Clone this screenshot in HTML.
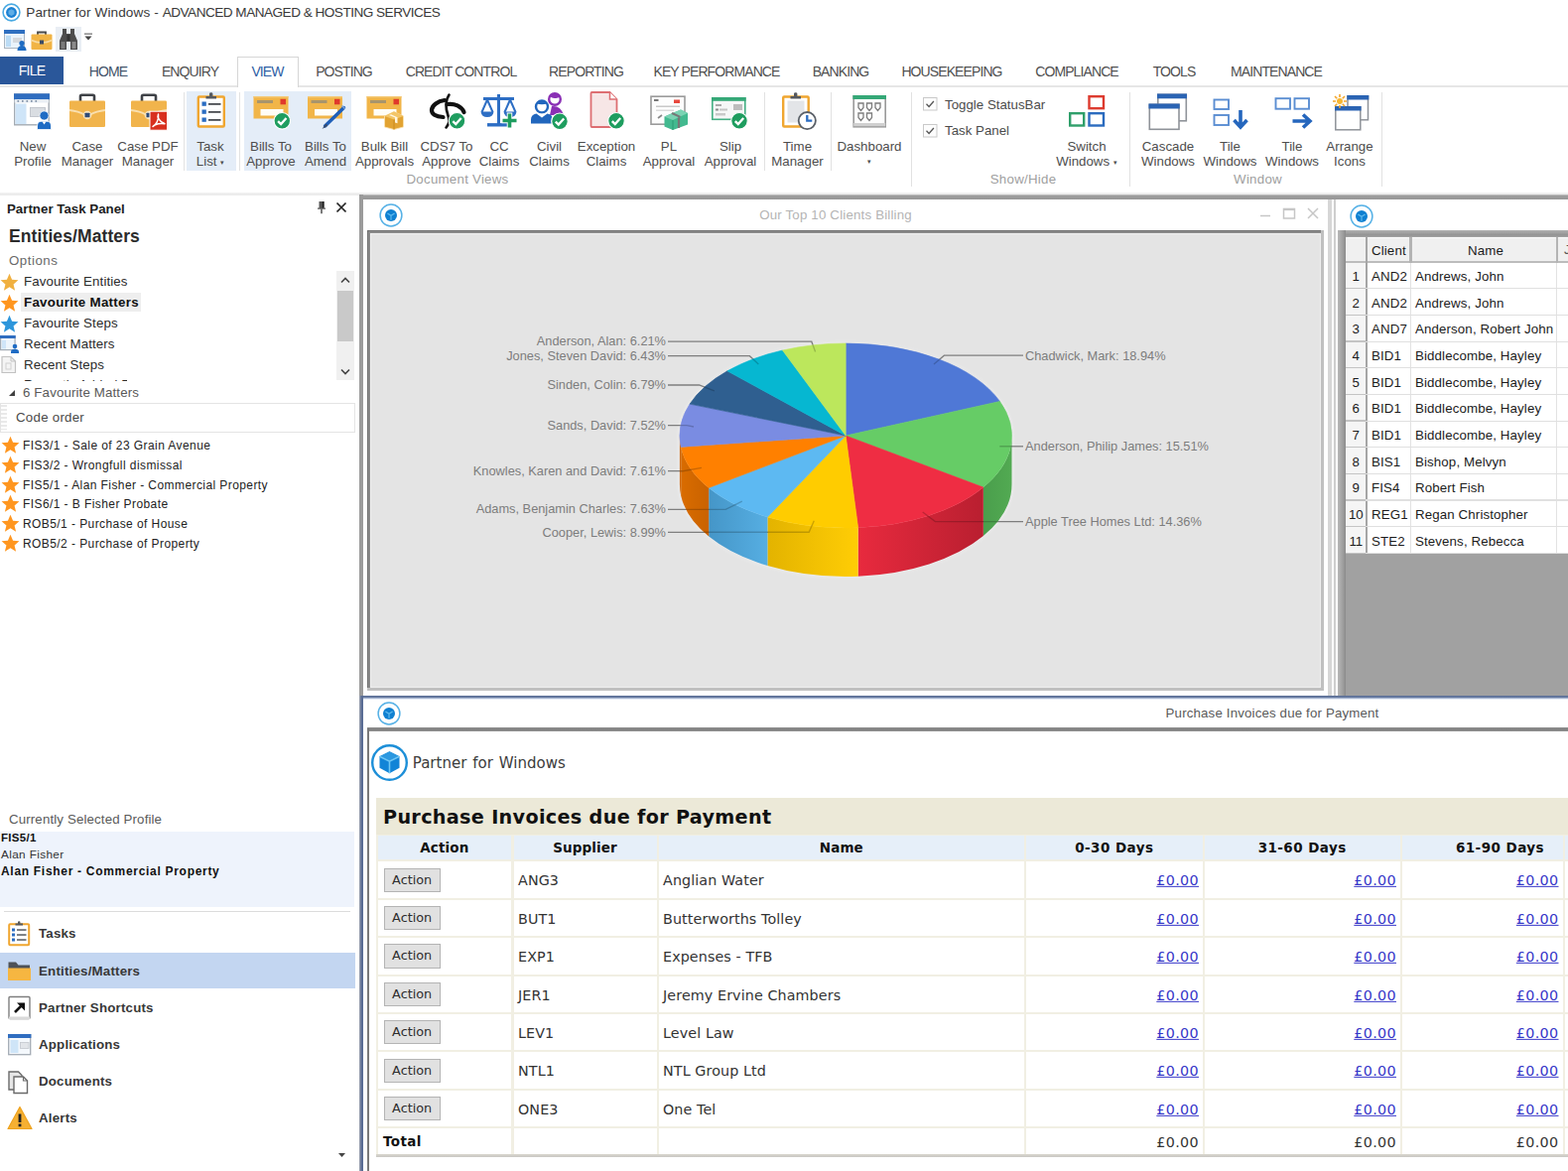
<!DOCTYPE html>
<html lang="en">
<head>
<meta charset="utf-8">
<title>Partner for Windows - ADVANCED MANAGED &amp; HOSTING SERVICES</title>
<style>
*{box-sizing:border-box;margin:0;padding:0}
html,body{width:1580px;height:1180px;overflow:hidden;background:#fff}
body{font-family:"Liberation Sans",sans-serif;font-size:12px;color:#444;position:relative}
.abs{position:absolute}
.t{position:absolute;white-space:nowrap;line-height:1}
svg{position:absolute;overflow:visible}
/* title */
#title{left:26.3px;top:6.3px;font-size:13.6px;color:#3a3a3a}
/* tabs */
.tab{position:absolute;top:65.2px;font-size:14px;letter-spacing:-.9px;color:#505050;white-space:nowrap;line-height:1;transform:translateX(-50%)}
#filetab{position:absolute;left:0;top:57px;width:64px;height:28px;background:#2a579a;color:#fff;font-size:14px;letter-spacing:-.8px;text-align:center;line-height:29px}
#viewtab{position:absolute;left:239px;top:57px;width:62px;height:31px;border:1px solid #d6d6d6;border-bottom:none;background:#fff}
#tabline{position:absolute;left:0;top:86px;width:1580px;height:2px;background:#e6e6e6}
/* ribbon */
.rb{position:absolute;top:139.5px;width:90px;margin-left:-45px;text-align:center;font-size:13.3px;line-height:15.3px;color:#4e4e4e;white-space:nowrap;letter-spacing:0}
.hl{position:absolute;background:#e4edf8}
.sep{position:absolute;width:1px;background:#e2e2e2}
.grp{position:absolute;top:174px;font-size:13.3px;letter-spacing:.25px;color:#a0a0a0;white-space:nowrap;line-height:1;transform:translateX(-50%)}
.ico{position:absolute;top:93px;width:40px;height:40px;margin-left:-20px}
</style>
</head>
<body>
<!-- ===== title bar ===== -->
<svg style="left:1px;top:2px" width="22" height="22" viewBox="0 0 22 22"><circle cx="10.5" cy="10.5" r="8.4" fill="#fff" stroke="#4aaae2" stroke-width="1.6"/><circle cx="10.5" cy="10.5" r="5.4" fill="#1b81d3"/><path d="M10.5 7.2l3 1.6v3.4l-3 1.7-3-1.7V8.800z" fill="#7cc0ee" opacity=".7"/></svg>
<div class="t" id="title"><span style="letter-spacing:.1px">Partner for Windows - </span><span style="letter-spacing:-.52px">ADVANCED MANAGED &amp; HOSTING SERVICES</span></div>
<!-- quick access -->
<div class="abs" style="left:56px;top:27px;width:26px;height:25px;background:#e9eef4"></div>
<svg style="left:4px;top:30px" width="22" height="22" viewBox="0 0 22 22"><rect x="0.5" y="0.500" width="20" height="18" fill="#eaf3fb" stroke="#a9b4c0"/><rect x="0" y="0" width="21" height="4" fill="#2f6fc0"/><rect x="2" y="6" width="5" height="11" fill="#bcdcf5"/><rect x="9" y="8" width="9" height="5" fill="#d5d9de"/><circle cx="18" cy="13.5" r="2.6" fill="#1e6cc3"/><path d="M13.500 21c0-3.500 2-5 4.500-5s4.500 1.500 4.500 5z" fill="#1e6cc3"/></svg>
<svg style="left:31px;top:30px" width="22" height="22" viewBox="0 0 22 22"><path d="M7 5V2.500h8V5" fill="none" stroke="#4a4a4a" stroke-width="1.800"/><rect x="0.500" y="4.500" width="21" height="15.500" rx="1" fill="#f1b445"/><path d="M0.500 10.500q10.500 5 21 0" fill="none" stroke="#f8dca3" stroke-width="1.500"/><rect x="9" y="10.500" width="4" height="4" fill="#3b4c66"/></svg>
<svg style="left:58px;top:28px" width="22" height="23" viewBox="0 0 22 23"><path d="M5 1h4v5h4V1h4v5l3 7v9h-7v-8h-4v8H2v-9l3-7z" fill="#4d4d4d"/><rect x="3.500" y="14" width="4" height="7" fill="#7a7a7a"/><rect x="14.500" y="14" width="4" height="7" fill="#8a8a8a"/><rect x="9.500" y="7" width="3" height="6" fill="#333"/></svg>
<svg style="left:84px;top:33px" width="10" height="8" viewBox="0 0 10 8"><rect x="1" y="0.500" width="8" height="1.300" fill="#777"/><path d="M1.500 3.500h7L5 7.500z" fill="#444"/></svg>

<!-- ===== tabs ===== -->
<div id="tabline"></div>
<div id="filetab">FILE</div>
<div id="viewtab"></div>
<div class="tab" style="left:109px;color:#44546a">HOME</div>
<div class="tab" style="left:191.500px">ENQUIRY</div>
<div class="tab" style="left:269.500px;color:#2f5fa5">VIEW</div>
<div class="tab" style="left:346.500px">POSTING</div>
<div class="tab" style="left:464.500px">CREDIT CONTROL</div>
<div class="tab" style="left:590.500px">REPORTING</div>
<div class="tab" style="left:722px">KEY PERFORMANCE</div>
<div class="tab" style="left:847px">BANKING</div>
<div class="tab" style="left:959px">HOUSEKEEPING</div>
<div class="tab" style="left:1085px">COMPLIANCE</div>
<div class="tab" style="left:1183px">TOOLS</div>
<div class="tab" style="left:1286px">MAINTENANCE</div>

<!-- ===== ribbon body ===== -->
<div class="hl" style="left:188px;top:92px;width:50px;height:80px"></div>
<div class="hl" style="left:246px;top:92px;width:108px;height:80px"></div>
<div class="sep" style="left:185px;top:93px;height:79px"></div>
<div class="sep" style="left:241px;top:93px;height:79px"></div>
<div class="sep" style="left:770px;top:93px;height:79px"></div>
<div class="sep" style="left:837px;top:93px;height:79px"></div>
<div class="sep" style="left:918px;top:93px;height:95px"></div>
<div class="sep" style="left:1138px;top:93px;height:95px"></div>
<div class="sep" style="left:1392px;top:93px;height:95px"></div>
<div class="abs" style="left:0;top:193.500px;width:1580px;height:3.800px;background:linear-gradient(#f6f6f6,#ececec 40%,#ededed)"></div>

<div class="rb" style="left:33px">New<br>Profile</div>
<div class="rb" style="left:88px">Case<br>Manager</div>
<div class="rb" style="left:149px">Case PDF<br>Manager</div>
<div class="rb" style="left:212px">Task<br>List <span style="font-size:7px;position:relative;top:-1px">▾</span></div>
<div class="rb" style="left:273px">Bills To<br>Approve</div>
<div class="rb" style="left:328px">Bills To<br>Amend</div>
<div class="rb" style="left:387.500px">Bulk Bill<br>Approvals</div>
<div class="rb" style="left:450px">CDS7 To<br>Approve</div>
<div class="rb" style="left:503px">CC<br>Claims</div>
<div class="rb" style="left:553.500px">Civil<br>Claims</div>
<div class="rb" style="left:611px">Exception<br>Claims</div>
<div class="rb" style="left:674px">PL<br>Approval</div>
<div class="rb" style="left:736px">Slip<br>Approval</div>
<div class="rb" style="left:803.500px">Time<br>Manager</div>
<div class="rb" style="left:876px">Dashboard<br><span style="font-size:7px;position:relative;top:-2px">▾</span></div>
<div class="rb" style="left:1095px">Switch<br>Windows <span style="font-size:7px;position:relative;top:-1px">▾</span></div>
<div class="rb" style="left:1177px">Cascade<br>Windows</div>
<div class="rb" style="left:1239.500px">Tile<br>Windows</div>
<div class="rb" style="left:1302px">Tile<br>Windows</div>
<div class="rb" style="left:1360px">Arrange<br>Icons</div>
<div class="grp" style="left:461px">Document Views</div>
<div class="grp" style="left:1031px">Show/Hide</div>
<div class="grp" style="left:1267.500px">Window</div>

<!-- checkboxes -->
<svg style="left:930px;top:98px" width="15" height="14" viewBox="0 0 15 14"><rect x="0.500" y="0.500" width="13.500" height="12.500" fill="#fdfdfd" stroke="#c9c9c9"/><path d="M3.500 6.800l2.600 2.700 4.800-5.500" fill="none" stroke="#555" stroke-width="1.300"/></svg>
<svg style="left:930px;top:125px" width="15" height="14" viewBox="0 0 15 14"><rect x="0.500" y="0.500" width="13.500" height="12.500" fill="#fdfdfd" stroke="#c9c9c9"/><path d="M3.500 6.800l2.600 2.700 4.800-5.500" fill="none" stroke="#555" stroke-width="1.300"/></svg>
<div class="t" style="left:952px;top:98.500px;font-size:13.300px;color:#4c4c4c">Toggle StatusBar</div>
<div class="t" style="left:952px;top:124.500px;font-size:13.300px;color:#4c4c4c">Task Panel</div>
<!-- ===== ribbon icons ===== -->
<svg width="0" height="0" style="left:0;top:0"><defs>
<symbol id="chk" viewBox="0 0 18 18" overflow="visible"><circle cx="9" cy="9" r="8.300" fill="#1e9d5f" stroke="#fff" stroke-width="1.200"/><path d="M4.800 9.300l3 3 5.400-6" fill="none" stroke="#fff" stroke-width="2.300"/></symbol>
<symbol id="bill" viewBox="0 0 35 23" overflow="visible"><rect x="0" y="0" width="35" height="22.500" fill="#f1b548"/><rect x="0" y="0" width="35" height="1.500" fill="#f5c873"/><rect x="3.500" y="4" width="16" height="3" fill="#a8956c"/><rect x="27" y="2.800" width="5.500" height="5.500" fill="#e0392b"/><rect x="7" y="13" width="23" height="6.500" fill="#fffdf6"/></symbol>
<symbol id="case" viewBox="0 0 36 34" overflow="visible"><path d="M11 8V3.200q0-1.500 1.500-1.500h11q1.500 0 1.500 1.500V8" fill="none" stroke="#3f4247" stroke-width="2.600"/><rect x="0" y="7.500" width="36" height="26.500" rx="1.200" fill="#f1b44c"/><path d="M0 17q9 1 15 4.500h6q6-3.500 15-4.500" fill="none" stroke="#f9dfae" stroke-width="1.800"/><circle cx="18" cy="22" r="4.300" fill="#fbe6bd"/><rect x="15.500" y="19.700" width="5" height="4.600" rx=".6" fill="#2d4a78"/></symbol>
</defs></svg>

<!-- New Profile -->
<svg class="ico" style="left:33px" viewBox="0 0 40 40"><rect x="1.700" y="2" width="34.500" height="30.800" fill="#fff" stroke="#a4abb3" stroke-width="1.400"/><rect x="1" y="1.300" width="36" height="6" fill="#2f6dc0"/><rect x="1.700" y="7.300" width="34.500" height="3.200" fill="#e9eef4"/><g fill="#6b7f99"><rect x="4.500" y="8.200" width="1.600" height="1.500"/><rect x="9" y="8.200" width="1.600" height="1.500"/><rect x="13.500" y="8.200" width="1.600" height="1.500"/><rect x="18" y="8.200" width="1.600" height="1.500"/><rect x="22.500" y="8.200" width="1.600" height="1.500"/></g><rect x="2.500" y="11.500" width="11" height="20.500" fill="#cfe5f8"/><rect x="17.500" y="15.500" width="15" height="9" fill="#d9dde2" stroke="#b9bec6" stroke-width=".8"/><circle cx="31.500" cy="23.500" r="4.600" fill="#1f6cc4" stroke="#fff" stroke-width=".8"/><path d="M24.500 37.500v-3.500q0-4.800 4.500-4.800h5q4.500 0 4.500 4.800v3.500z" fill="#1f6cc4" stroke="#fff" stroke-width=".8"/><path d="M29.500 29.500l2 3 2-3z" fill="#fff"/></svg>
<!-- Case Manager -->
<svg class="ico" style="left:88px" viewBox="0 0 40 40"><use href="#case" x="2" y="1" width="36" height="34"/></svg>
<!-- Case PDF Manager -->
<svg class="ico" style="left:149px" viewBox="0 0 40 40"><use href="#case" x="3" y="1" width="36" height="34"/><rect x="22" y="19.200" width="17.500" height="19" fill="#d8301e" stroke="#fff" stroke-width="1"/><path d="M30.500 22c-1.500 3 1 7.500 6.500 9.800c-4-1-9.500 0-12 2.700c3-1.500 6.500-6.500 5.500-12.500z" fill="none" stroke="#fff" stroke-width="1.500" stroke-linejoin="round"/></svg>
<!-- Task List -->
<svg class="ico" style="left:212px" viewBox="0 0 40 40"><rect x="7.800" y="4.500" width="26" height="30" rx="1" fill="#fff" stroke="#f0a630" stroke-width="2.400"/><path d="M15.500 6.500v-2.500h3.500v-2.500q0-1.300 1.700-1.300t1.700 1.300v2.500h3.600v2.500z" fill="#56595e"/><g fill="#2a6cc2"><rect x="11.500" y="9.500" width="4.300" height="4.300"/><rect x="11.500" y="17.500" width="4.300" height="4.300"/><rect x="11.500" y="25.500" width="4.300" height="4.300"/></g><g fill="#4a4d52"><rect x="18" y="11" width="12.500" height="1.800"/><rect x="18" y="19" width="12.500" height="1.800"/><rect x="18" y="27" width="12.500" height="1.800"/></g></svg>
<!-- Bills To Approve -->
<svg class="ico" style="left:273px" viewBox="0 0 40 40"><use href="#bill" x="2.500" y="4" width="35" height="23"/><use href="#chk" x="22.300" y="19.800" width="18" height="18"/></svg>
<!-- Bills To Amend -->
<svg class="ico" style="left:328px" viewBox="0 0 40 40"><use href="#bill" x="2" y="4" width="35" height="23"/><path d="M38.500 15.500L19.500 34" stroke="#1f5fb8" stroke-width="3.400" stroke-linecap="round"/><path d="M20.500 31.500l-4 5.500 5.800-3.300z" fill="#3a4a68"/><path d="M36.500 13.500l3.200 3.200" stroke="#7aa4dc" stroke-width="1.500"/></svg>
<!-- Bulk Bill Approvals -->
<svg class="ico" style="left:387.500px" viewBox="0 0 40 40"><use href="#bill" x="1.500" y="4" width="35" height="23"/><path d="M19.500 24l9.500-4.500 9.500 4.500v11l-9.500 2.500-9.500-2.500z" fill="#e2a332" stroke="#fbe3b3" stroke-width=".8"/><path d="M19.500 24l9.500 3.500 9.500-3.500-9.500-4.500z" fill="#f3c567"/><path d="M29 27.500v10" stroke="#c98a1f" stroke-width="1"/><path d="M26 22.300l6.500 3v6l-2.500-.8v-5l-6-2.500z" fill="#fff6e0"/></svg>
<!-- CDS7 To Approve -->
<svg class="ico" style="left:450px" viewBox="0 0 40 40"><path d="M18 8c-7 1-12.500 5-13 9.500s4 7 11.500 7.500" fill="none" stroke="#111" stroke-width="4.200" stroke-linecap="round"/><path d="M22.500 2.500c-4 6-3.500 14-1 21s0 9-2 12" fill="none" stroke="#111" stroke-width="2.600" stroke-linecap="round"/><path d="M21 12c7-1 14 2 16.500 8" fill="none" stroke="#111" stroke-width="4.200" stroke-linecap="round"/><use href="#chk" x="21.500" y="19.800" width="18" height="18"/></svg>
<!-- CC Claims -->
<svg class="ico" style="left:503px" viewBox="0 0 40 40"><g fill="none" stroke="#2d6ec4" stroke-width="3"><path d="M19.500 2v30"/><path d="M4 6.500h31"/><path d="M8 7.500l-5.500 12.500M8 7.500l5.500 12.500M31 7.500l-5.500 12.500M31 7.500l5.500 12.500" stroke-width="2"/><path d="M8 32.800h23" stroke-width="3.400"/></g><path d="M1.500 19.500h13q-.8 5.500-6.500 5.500t-6.500-5.500zM24.500 19.500h13q-.8 5.500-6.500 5.500t-6.500-5.500z" fill="#2d6ec4"/><path d="M30.500 20.500v16M22.500 28.500h16" stroke="#fff" stroke-width="5.500"/><path d="M30.500 21.500v14M23.500 28.500h14" stroke="#1e9d5f" stroke-width="3.600"/></svg>
<!-- Civil Claims -->
<svg class="ico" style="left:553.500px" viewBox="0 0 40 40"><circle cx="25" cy="7" r="5.800" fill="#fff" stroke="#8a2fb5" stroke-width="2.400"/><path d="M20 3.500q5-4.500 10 0q-1 3-5 2.500t-5-2.500z" fill="#8a2fb5"/><path d="M22 14q9-1 12 9h-14z" fill="#8a2fb5"/><circle cx="12" cy="14.500" r="6" fill="#fff" stroke="#2166bd" stroke-width="2.400"/><path d="M6.500 11.500q5.500-5 11 0q-5.500 1.500-11 0z" fill="#2166bd"/><path d="M1 31.500v-4q0-5 5.500-6l5.500 4 5.500-4q5.500 1 5.500 6v4z" fill="#2166bd"/><path d="M9.500 21.500l2.500 4 2.500-4z" fill="#fff"/><use href="#chk" x="21" y="20.300" width="18" height="18"/></svg>
<!-- Exception Claims -->
<svg class="ico" style="left:611px" viewBox="0 0 40 40"><path d="M5.500 0h18l7 7v28h-25q-1 0-1-1v-33q0-1 1-1z" fill="#f7e6e6" stroke="#dd6e72" stroke-width="1.800"/><path d="M23.500 0v7h7" fill="#fff" stroke="#dd6e72" stroke-width="1.500"/><use href="#chk" x="21" y="19.800" width="18" height="18"/></svg>
<!-- PL Approval -->
<svg class="ico" style="left:674px" viewBox="0 0 40 40"><rect x="2" y="4.200" width="34" height="28" fill="#fdfdfd" stroke="#9b9b9b" stroke-width="1.600"/><rect x="5" y="7" width="4.500" height="2" fill="#777"/><rect x="25" y="7.500" width="6" height="3.500" fill="#e8473d"/><rect x="7" y="13.500" width="24" height="1.500" fill="#c9c9c9"/><rect x="7" y="17.500" width="18" height="1.500" fill="#dcdcdc"/><path d="M9 26l4-3" stroke="#888" stroke-width="1.600"/><path d="M15.500 24.500l8-3.500 8.500-3.500 7 3.500v11.500l-15 5.500-8.500-3.500z" fill="#42b98f"/><path d="M15.500 24.500l8.500 3.500 15-7-7-3.500z" fill="#7ad3b3"/><path d="M24 28v10" stroke="#2a9a72" stroke-width="1"/><path d="M30 25.500v10.500" stroke="#777" stroke-width="2.200"/><path d="M23 21l8.500 3.800" stroke="#777" stroke-width="2"/></svg>
<!-- Slip Approval -->
<svg class="ico" style="left:736px" viewBox="0 0 40 40"><rect x="1.800" y="5.800" width="33" height="21.500" fill="#f6f7f7" stroke="#45b084" stroke-width="1.600"/><rect x="1" y="5" width="34.600" height="3.800" fill="#35a877"/><rect x="5" y="12" width="6" height="2" fill="#a9a9a9"/><rect x="5" y="16.500" width="3" height="2" fill="#8c8c8c"/><rect x="9" y="16.500" width="8" height="2" fill="#c5c5c5"/><rect x="5" y="21" width="10" height="2.500" fill="#c9c9c9"/><rect x="23" y="12" width="9" height="6" fill="#bdbdbd"/><use href="#chk" x="20" y="19.800" width="18" height="18"/></svg>
<!-- Time Manager -->
<svg class="ico" style="left:803.500px" viewBox="0 0 40 40"><rect x="5.200" y="4.500" width="25.500" height="30" rx="1" fill="#fff" stroke="#f0a630" stroke-width="2.400"/><rect x="9.500" y="8.500" width="17" height="22" fill="#e3e5e8"/><path d="M12.500 6.500v-2.500h3.500v-2.500q0-1.300 1.700-1.300t1.700 1.300v2.500h3.600v2.500z" fill="#56595e"/><circle cx="29.300" cy="28.600" r="8.600" fill="#fff" stroke="#5a6068" stroke-width="1.800"/><path d="M29.300 23v5.600h5" fill="none" stroke="#2a6cc2" stroke-width="2.300"/></svg>
<!-- Dashboard -->
<svg class="ico" style="left:876px" viewBox="0 0 40 40"><rect x="4.200" y="3.800" width="32" height="31" fill="#fdfdfd" stroke="#9a9a9a" stroke-width="1.600"/><rect x="3.400" y="3" width="33.600" height="4" fill="#35a877"/><rect x="4.200" y="31" width="32" height="3.200" fill="#d0d0d0"/><g fill="#fff" stroke="#7d7d7d" stroke-width="1.300"><path d="M9 11h5v4.500l-2.500 3-2.500-3z"/><path d="M17.500 11h5v4.500l-2.500 3-2.500-3z"/><path d="M26 11h5v4.500l-2.500 3-2.500-3z"/><path d="M9 21h5v4.500l-2.500 3-2.500-3z"/><path d="M17.500 21h5v4.500l-2.500 3-2.500-3z"/></g></svg>
<!-- Switch Windows -->
<svg class="ico" style="left:1095px" viewBox="0 0 40 40"><rect x="22.500" y="4.200" width="14.500" height="12" fill="#fff" stroke="#dd3b2f" stroke-width="2.400"/><rect x="3.200" y="21.200" width="14" height="12.300" fill="#fff" stroke="#2f9f6a" stroke-width="2.400"/><rect x="22.500" y="21.200" width="14.500" height="12.300" fill="#fff" stroke="#2b6bbf" stroke-width="2.400"/></svg>
<!-- Cascade Windows -->
<svg class="ico" style="left:1177px" viewBox="0 0 40 40"><rect x="9.800" y="2.300" width="28.500" height="26.500" fill="#fff" stroke="#8f9399" stroke-width="1.600"/><rect x="9" y="1.500" width="30" height="4.800" fill="#2a63b3"/><rect x="1.300" y="12.300" width="29.700" height="25" fill="#fff" stroke="#8f9399" stroke-width="1.600"/><rect x="0.500" y="11.500" width="31.200" height="5" fill="#2a63b3"/></svg>
<!-- Tile Windows (vertical) -->
<svg class="ico" style="left:1239.500px" viewBox="0 0 40 40"><rect x="3.500" y="7.500" width="14.500" height="9.500" fill="#fff" stroke="#5b8ed2" stroke-width="1.900"/><rect x="3.500" y="23" width="14.500" height="10" fill="#fff" stroke="#5b8ed2" stroke-width="1.900"/><path d="M30 18v16M23.500 28l6.500 7 6.500-7" fill="none" stroke="#2566bd" stroke-width="3.600"/></svg>
<!-- Tile Windows (horizontal) -->
<svg class="ico" style="left:1302px" viewBox="0 0 40 40"><rect x="3.500" y="6.200" width="14.500" height="10.500" fill="#fff" stroke="#5b8ed2" stroke-width="1.900"/><rect x="22.500" y="6.200" width="14.500" height="10.500" fill="#fff" stroke="#5b8ed2" stroke-width="1.900"/><path d="M20.500 29h17M31 22.500l7 6.500-7 6.500" fill="none" stroke="#2566bd" stroke-width="3.600"/></svg>
<!-- Arrange Icons -->
<svg class="ico" style="left:1360px" viewBox="0 0 40 40"><rect x="18" y="3.800" width="20.500" height="24" fill="#fff" stroke="#8f9399" stroke-width="1.500"/><rect x="17.300" y="3" width="22" height="4.500" fill="#2a63b3"/><rect x="5.800" y="14.800" width="25" height="23" fill="#fff" stroke="#8f9399" stroke-width="1.500"/><rect x="5" y="14" width="26.600" height="4.500" fill="#2a63b3"/><g stroke="#f4a62a" stroke-width="1.600"><path d="M10 2v14M3 9h14M5 4l10 10M15 4L5 14"/></g><circle cx="10" cy="9" r="3.600" fill="#f7b733" stroke="#fff" stroke-width="1"/></svg>
<!-- ===== left task panel ===== -->
<style>
.lp{position:absolute;white-space:nowrap;line-height:1;color:#2b2b2b;font-size:13.300px;letter-spacing:.1px;transform:translateY(-50%)}
.tr{position:absolute;left:23px;white-space:nowrap;line-height:1;color:#222;font-size:12px;letter-spacing:.42px;transform:translateY(-50%)}
.nav{position:absolute;left:39px;white-space:nowrap;line-height:1;color:#383838;font-size:13.300px;font-weight:bold;letter-spacing:.2px;transform:translateY(-50%)}
</style>
<svg width="0" height="0" style="left:0;top:0"><defs>
<symbol id="star" viewBox="0 0 20 20"><path d="M10 0.800l2.700 6.200 6.700.6-5.100 4.400 1.600 6.600-5.900-3.600-5.900 3.600 1.600-6.600L0.600 7.600l6.700-.6z"/></symbol>
</defs></svg>
<div class="lp" style="left:7px;top:211px;font-weight:bold;font-size:13.300px;letter-spacing:0;color:#1e1e1e">Partner Task Panel</div>
<svg style="left:318px;top:202px" width="12" height="14" viewBox="0 0 12 14"><path d="M3.500 1h5v6.500h1.500v1.300h-8V7.500h1.500z" fill="#555"/><rect x="6.800" y="1" width="1.700" height="6.500" fill="#222"/><path d="M6 8.800v4.500" stroke="#333" stroke-width="1.300"/></svg>
<svg style="left:338px;top:203.300px" width="12" height="12" viewBox="0 0 12 12"><path d="M1.500 1.500l9 9M10.500 1.500l-9 9" stroke="#222" stroke-width="1.700"/></svg>
<div class="lp" style="left:9px;top:238.500px;font-weight:bold;font-size:17.500px;letter-spacing:.1px;color:#2b2b2b">Entities/Matters</div>
<div class="lp" style="left:9px;top:263px;color:#6a6a6a;letter-spacing:.5px">Options</div>

<svg style="left:0;top:275px" width="19" height="19" viewBox="0 0 20 20"><use href="#star" fill="#f0b040"/></svg>
<svg style="left:0;top:296px" width="19" height="19" viewBox="0 0 20 20"><use href="#star" fill="#ff961f"/></svg>
<svg style="left:0;top:316.500px" width="19" height="19" viewBox="0 0 20 20"><use href="#star" fill="#2e96db"/></svg>
<svg style="left:0;top:337px" width="19" height="19" viewBox="0 0 19 19"><rect x="0.600" y="1.600" width="14.500" height="14" fill="#eef5fb" stroke="#a4acb5" stroke-width="1.200"/><rect x="0" y="1" width="15.700" height="3" fill="#2f6dc0"/><rect x="2" y="6" width="4" height="8.500" fill="#cfe5f8"/><circle cx="15" cy="12" r="2.300" fill="#1f6cc4"/><path d="M11 19v-1.500q0-2.700 4-2.700t4 2.700v1.500z" fill="#1f6cc4"/></svg>
<svg style="left:0;top:358px" width="19" height="19" viewBox="0 0 19 19"><path d="M2 1.500h9l4.500 4.500v11.500h-13.500z" fill="#f4f4f4" stroke="#c2c2c2" stroke-width="1.200"/><path d="M11 1.500v4.500h4.500" fill="none" stroke="#c2c2c2"/><rect x="6" y="8" width="5" height="6" fill="none" stroke="#d0d0d0"/></svg>
<div class="abs" style="left:21px;top:294.500px;width:121px;height:19px;background:#eeeeee"></div>
<div class="lp" style="left:24px;top:284px">Favourite Entities</div>
<div class="lp" style="left:24px;top:305px;font-weight:bold;letter-spacing:.3px;color:#111">Favourite Matters</div>
<div class="lp" style="left:24px;top:326px">Favourite Steps</div>
<div class="lp" style="left:24px;top:347px">Recent Matters</div>
<div class="lp" style="left:24px;top:367.500px">Recent Steps</div>
<div class="abs" style="left:24px;top:381px;width:104px;height:3px;overflow:hidden"><div class="t" style="left:0;top:0;font-size:13.300px;letter-spacing:.1px;color:#2b2b2b">Recently Added Entities</div></div>
<!-- scrollbar -->
<div class="abs" style="left:339px;top:273px;width:18px;height:110px;background:#f0f0f0"></div>
<div class="abs" style="left:340px;top:293px;width:16px;height:51px;background:#c9c9c9"></div>
<svg style="left:343px;top:279px" width="10" height="7" viewBox="0 0 10 7"><path d="M1 5.500l4-4 4 4" fill="none" stroke="#444" stroke-width="1.600"/></svg>
<svg style="left:343px;top:371px" width="10" height="7" viewBox="0 0 10 7"><path d="M1 1.500l4 4 4-4" fill="none" stroke="#444" stroke-width="1.600"/></svg>

<svg style="left:8px;top:392px" width="8" height="8" viewBox="0 0 8 8"><path d="M7 1v6H1z" fill="#404040"/></svg>
<div class="lp" style="left:23px;top:395.500px;color:#5a5a5a;letter-spacing:.13px">6 Favourite Matters</div>
<div class="abs" style="left:0;top:405.500px;width:358px;height:30px;border:1px solid #e4e4e4;background:#fff"></div>
<div class="abs" style="left:1px;top:408px;width:6px;height:25px;background:repeating-linear-gradient(#e9e9e9 0 2px,#fff 2px 4px)"></div>
<div class="lp" style="left:16px;top:421px;color:#4a4a4a;letter-spacing:.25px">Code order</div>

<svg style="left:1px;top:439px" width="19" height="19" viewBox="0 0 20 20"><use href="#star" fill="#ff961f"/></svg>
<svg style="left:1px;top:459px" width="19" height="19" viewBox="0 0 20 20"><use href="#star" fill="#ff961f"/></svg>
<svg style="left:1px;top:478.500px" width="19" height="19" viewBox="0 0 20 20"><use href="#star" fill="#ff961f"/></svg>
<svg style="left:1px;top:498px" width="19" height="19" viewBox="0 0 20 20"><use href="#star" fill="#ff961f"/></svg>
<svg style="left:1px;top:518px" width="19" height="19" viewBox="0 0 20 20"><use href="#star" fill="#ff961f"/></svg>
<svg style="left:1px;top:537.500px" width="19" height="19" viewBox="0 0 20 20"><use href="#star" fill="#ff961f"/></svg>
<div class="tr" style="top:449px">FIS3/1 - Sale of 23 Grain Avenue</div>
<div class="tr" style="top:469px">FIS3/2 - Wrongfull dismissal</div>
<div class="tr" style="top:488.500px">FIS5/1 - Alan Fisher - Commercial Property</div>
<div class="tr" style="top:508px">FIS6/1 - B Fisher Probate</div>
<div class="tr" style="top:528px">ROB5/1 - Purchase of House</div>
<div class="tr" style="top:547.500px">ROB5/2 - Purchase of Property</div>

<div class="lp" style="left:9px;top:826px;color:#5a5a5a;letter-spacing:.13px">Currently Selected Profile</div>
<div class="abs" style="left:0;top:837.500px;width:357px;height:76.500px;background:#eef3fc"></div>
<div class="tr" style="left:1px;top:845px;font-weight:bold;font-size:11.500px;letter-spacing:.3px;color:#111">FIS5/1</div>
<div class="tr" style="left:1px;top:861.500px;font-size:11.800px;letter-spacing:.35px;color:#333">Alan Fisher</div>
<div class="tr" style="left:1px;top:878px;font-weight:bold;font-size:12px;letter-spacing:.7px;color:#111">Alan Fisher - Commercial Property</div>
<div class="abs" style="left:4px;top:918px;width:349px;height:1px;background:#dcdcdc"></div>

<div class="abs" style="left:0;top:960px;width:358px;height:36.300px;background:#c3d6f1"></div>
<div class="nav" style="top:941px">Tasks</div>
<div class="nav" style="top:978.500px">Entities/Matters</div>
<div class="nav" style="top:1015.500px">Partner Shortcuts</div>
<div class="nav" style="top:1052.500px">Applications</div>
<div class="nav" style="top:1089.500px">Documents</div>
<div class="nav" style="top:1126.500px">Alerts</div>
<!-- nav icons -->
<svg style="left:8px;top:928px" width="24" height="26" viewBox="0 0 24 26"><rect x="1.200" y="3.200" width="20" height="21" rx="1" fill="#fff" stroke="#f0a630" stroke-width="2"/><path d="M7.500 4.500v-2h2.500v-1.500q0-.8 1.200-.8t1.200.8v1.500h2.600v2z" fill="#56595e"/><g fill="#2a6cc2"><rect x="4" y="7.500" width="3" height="3"/><rect x="4" y="12.500" width="3" height="3"/><rect x="4" y="17.500" width="3" height="3"/></g><g fill="#55595e"><rect x="9" y="8.300" width="9.500" height="1.500"/><rect x="9" y="13.300" width="9.500" height="1.500"/><rect x="9" y="18.300" width="9.500" height="1.500"/></g></svg>
<svg style="left:8px;top:967px" width="24" height="22" viewBox="0 0 24 22"><path d="M0.500 2.500h7.500l2.500 3h11.500v14h-21.500z" fill="#4e5258"/><path d="M0 8.500h23v12.500h-23z" fill="#f6b641"/></svg>
<svg style="left:8px;top:1003px" width="24" height="26" viewBox="0 0 24 26"><rect x="1" y="1.500" width="21" height="22" rx="1" fill="#fff" stroke="#7f7f7f" stroke-width="1.400"/><rect x="1" y="21.500" width="21" height="2.500" fill="#d9d9d9"/><path d="M7 17l8-8" stroke="#111" stroke-width="2.600"/><path d="M9 7.500h8v8z" fill="#111"/></svg>
<svg style="left:8px;top:1041px" width="24" height="24" viewBox="0 0 24 24"><rect x="0.700" y="1.700" width="22" height="20" fill="#f4f8fc" stroke="#a4acb5" stroke-width="1.300"/><rect x="0" y="1" width="23.400" height="4" fill="#2f6dc0"/><rect x="2.500" y="7" width="8" height="13" fill="#cfe5f8"/><rect x="12.500" y="9.500" width="8.500" height="6" fill="#e2e5e9" stroke="#c4c8ce" stroke-width=".8"/></svg>
<svg style="left:8px;top:1078px" width="24" height="26" viewBox="0 0 24 26"><path d="M1 2h9.500l3.500 3.500v14.500h-13z" fill="#e6e6e6" stroke="#6a6a6a" stroke-width="1.400"/><path d="M6 7h9.500l4 4v12.500h-13.500z" fill="#fff" stroke="#6a6a6a" stroke-width="1.400"/><path d="M15.500 7v4h4" fill="none" stroke="#6a6a6a" stroke-width="1.200"/></svg>
<svg style="left:7px;top:1114px" width="26" height="26" viewBox="0 0 26 26"><path d="M13 1.500L25 23.500H1z" fill="#f6b032" stroke="#eea21e" stroke-width="1.200" stroke-linejoin="round"/><rect x="11.600" y="8.500" width="2.800" height="8.500" fill="#222"/><rect x="11.600" y="18.500" width="2.800" height="2.800" fill="#222"/></svg>
<svg style="left:340px;top:1161px" width="9" height="6" viewBox="0 0 9 6"><path d="M1 1h7L4.500 5z" fill="#444"/></svg>
<!-- ===== MDI area ===== -->
<style>
.wt{position:absolute;white-space:nowrap;line-height:1;font-size:13.300px;transform:translate(-50%,-50%)}
</style>
<div class="abs" style="left:362px;top:196px;width:1218px;height:984px;background:#fff"></div>
<div class="abs" style="left:362px;top:196px;width:1218px;height:4.500px;background:linear-gradient(#cdcdcd 0,#9d9d9d 28%,#989898 100%)"></div>
<div class="abs" style="left:362px;top:196px;width:4px;height:506px;background:#9b9b9b"></div>
<!-- chart window -->
<div class="abs" style="left:1338px;top:200.500px;width:8px;height:500.500px;background:linear-gradient(90deg,#d6d6d6 0 4px,#fdfdfd 4px 6.200px,#cecece 6.200px 8px)"></div>
<div class="abs" style="left:370px;top:232px;width:963.800px;height:464.300px;background:#c0c0c0"></div>
<div class="abs" style="left:370px;top:232px;width:961.400px;height:461.200px;background:#8a8a8a;border-top:1.500px solid #707070;border-left:1.500px solid #707070"></div>
<div class="abs" style="left:373.300px;top:235.300px;width:958.100px;height:457.900px;background:#e4e4e4;border:1px solid #efefef"></div>
<svg style="left:381px;top:203.5px" width="26" height="26" viewBox="0 0 26 26"><circle cx="13" cy="13" r="10.9" fill="#fff" stroke="#56b1e6" stroke-width="1.500"/><circle cx="13" cy="13" r="6" fill="#0f80d1"/><path d="M13 13.300v4.500M13 13.300l-3.600-2.300M13 13.300l3.600-2.300" fill="none" stroke="#63bdf0" stroke-width="1.100"/></svg>
<div class="wt" style="left:842px;top:217px;color:#b4b4b4;letter-spacing:.18px">Our Top 10 Clients Billing</div>
<svg style="left:1268px;top:208px" width="64" height="16" viewBox="0 0 64 16"><g fill="none" stroke="#c6c6c6" stroke-width="1.500"><path d="M2 9.500h10"/><rect x="25.500" y="2.500" width="11" height="9.500"/><path d="M25.500 3h11" stroke-width="2.200"/><path d="M50 2l10 10M60 2l-10 10"/></g></svg>
<svg id="pie" style="left:0;top:0" width="1580" height="1180" viewBox="0 0 1580 1180">
<defs>
<linearGradient id="sg1" gradientUnits="userSpaceOnUse" x1="990.8" y1="0" x2="1019.5" y2="0"><stop offset="0" stop-color="#4a9e4c"/><stop offset="1" stop-color="#52aa52"/></linearGradient>
<linearGradient id="sg2" gradientUnits="userSpaceOnUse" x1="864.6" y1="0" x2="990.8" y2="0"><stop offset="0" stop-color="#e82a3e"/><stop offset="1" stop-color="#b91f30"/></linearGradient>
<linearGradient id="sg3" gradientUnits="userSpaceOnUse" x1="773.4" y1="0" x2="864.6" y2="0"><stop offset="0" stop-color="#e3b300"/><stop offset="1" stop-color="#ffcd05"/></linearGradient>
<linearGradient id="sg4" gradientUnits="userSpaceOnUse" x1="714.2" y1="0" x2="773.4" y2="0"><stop offset="0" stop-color="#4596c8"/><stop offset="1" stop-color="#56aee2"/></linearGradient>
<linearGradient id="sg5" gradientUnits="userSpaceOnUse" x1="686.2" y1="0" x2="714.2" y2="0"><stop offset="0" stop-color="#d96c00"/><stop offset="1" stop-color="#c96200"/></linearGradient>
<linearGradient id="sg6" gradientUnits="userSpaceOnUse" x1="684.9" y1="0" x2="686.2" y2="0"><stop offset="0" stop-color="#d06a10"/><stop offset="1" stop-color="#d06a10"/></linearGradient>
<filter id="psh" x="-10%" y="-10%" width="120%" height="130%"><feGaussianBlur stdDeviation="2.2"/></filter>
</defs>
<path d="M684.9 439.0v49.0a167.3 93.0 0 0 0 334.6 0v-49.0a167.3 93.0 0 0 0 -334.6 0z" fill="#f4f4f4" filter="url(#psh)" opacity=".9"/>
<g fill="none" stroke="#7e7e7e" stroke-width="1.3">
<polyline points="673.0,344.2 817.8,344.2 821.6,354.4"/>
<polyline points="673.0,358.7 755.4,358.7 764.3,367.0"/>
<polyline points="673.0,388.0 704.5,388.0 719.8,393.8"/>
<polyline points="673.0,428.6 692.0,428.6 699.0,430.0"/>
<polyline points="673.0,474.7 688.0,474.7 707.0,471.4"/>
<polyline points="673.0,513.4 731.2,513.4 747.8,505.2"/>
<polyline points="673.0,536.3 815.2,536.3 820.3,524.8"/>
<polyline points="1031.0,358.2 951.4,358.2 941.0,367.0"/>
<polyline points="1031.0,449.8 1007.3,449.8"/>
<polyline points="1031.0,525.6 942.4,525.6 929.7,516.0"/>
</g>
<path d="M1019.50 439.00A167.3 93.0 0 0 1 990.85 491.05L990.85 540.05A167.3 93.0 0 0 0 1019.50 488.00Z" fill="url(#sg1)"/>
<path d="M990.85 491.05A167.3 93.0 0 0 1 864.65 531.74L864.65 580.74A167.3 93.0 0 0 0 990.85 540.05Z" fill="url(#sg2)"/>
<path d="M864.65 531.74A167.3 93.0 0 0 1 773.40 521.04L773.40 570.04A167.3 93.0 0 0 0 864.65 580.74Z" fill="url(#sg3)"/>
<path d="M773.40 521.04A167.3 93.0 0 0 1 714.21 491.58L714.21 540.58A167.3 93.0 0 0 0 773.40 570.04Z" fill="url(#sg4)"/>
<path d="M714.21 491.58A167.3 93.0 0 0 1 686.16 450.38L686.16 499.38A167.3 93.0 0 0 0 714.21 540.58Z" fill="url(#sg5)"/>
<path d="M686.16 450.38A167.3 93.0 0 0 1 684.90 439.00L684.90 488.00A167.3 93.0 0 0 0 686.16 499.38Z" fill="url(#sg6)"/>
<path d="M852.20 439.00L852.20 346.00A167.3 93.0 0 0 1 1007.53 404.45Z" fill="#4f78d6" stroke="#4f78d6" stroke-width=".6"/>
<path d="M852.20 439.00L1007.53 404.45A167.3 93.0 0 0 1 990.85 491.05Z" fill="#66cc66" stroke="#66cc66" stroke-width=".6"/>
<path d="M852.20 439.00L990.85 491.05A167.3 93.0 0 0 1 864.65 531.74Z" fill="#ef2d43" stroke="#ef2d43" stroke-width=".6"/>
<path d="M852.20 439.00L864.65 531.74A167.3 93.0 0 0 1 773.40 521.04Z" fill="#ffcc00" stroke="#ffcc00" stroke-width=".6"/>
<path d="M852.20 439.00L773.40 521.04A167.3 93.0 0 0 1 714.21 491.58Z" fill="#5db9f2" stroke="#5db9f2" stroke-width=".6"/>
<path d="M852.20 439.00L714.21 491.58A167.3 93.0 0 0 1 686.16 450.38Z" fill="#ff8000" stroke="#ff8000" stroke-width=".6"/>
<path d="M852.20 439.00L686.16 450.38A167.3 93.0 0 0 1 695.03 407.12Z" fill="#7a8ce2" stroke="#7a8ce2" stroke-width=".6"/>
<path d="M852.20 439.00L695.03 407.12A167.3 93.0 0 0 1 732.86 373.83Z" fill="#2f5f90" stroke="#2f5f90" stroke-width=".6"/>
<path d="M852.20 439.00L732.86 373.83A167.3 93.0 0 0 1 788.56 352.99Z" fill="#06b7d1" stroke="#06b7d1" stroke-width=".6"/>
<path d="M852.20 439.00L788.56 352.99A167.3 93.0 0 0 1 852.20 346.00Z" fill="#bce75c" stroke="#bce75c" stroke-width=".6"/>
<clipPath id="pclip"><path d="M684.9 439.0v49.0a167.3 93.0 0 0 0 334.6 0v-49.0a167.3 93.0 0 0 0 -334.6 0z"/></clipPath>
<g fill="none" stroke="#000" stroke-opacity=".2" stroke-width="1.4" clip-path="url(#pclip)">
<polyline points="673.0,344.2 817.8,344.2 821.6,354.4"/>
<polyline points="673.0,358.7 755.4,358.7 764.3,367.0"/>
<polyline points="673.0,388.0 704.5,388.0 719.8,393.8"/>
<polyline points="673.0,428.6 692.0,428.6 699.0,430.0"/>
<polyline points="673.0,474.7 688.0,474.7 707.0,471.4"/>
<polyline points="673.0,513.4 731.2,513.4 747.8,505.2"/>
<polyline points="673.0,536.3 815.2,536.3 820.3,524.8"/>
<polyline points="1031.0,358.2 951.4,358.2 941.0,367.0"/>
<polyline points="1031.0,449.8 1007.3,449.8"/>
<polyline points="1031.0,525.6 942.4,525.6 929.7,516.0"/>
</g>
<g font-family="'Liberation Sans',sans-serif" font-size="12.8" fill="#7d7d7d">
<text x="671" y="348.1" text-anchor="end">Anderson, Alan: 6.21%</text>
<text x="671" y="362.9" text-anchor="end">Jones, Steven David: 6.43%</text>
<text x="671" y="392.1" text-anchor="end">Sinden, Colin: 6.79%</text>
<text x="671" y="432.5" text-anchor="end">Sands, David: 7.52%</text>
<text x="671" y="478.7" text-anchor="end">Knowles, Karen and David: 7.61%</text>
<text x="671" y="517.1" text-anchor="end">Adams, Benjamin Charles: 7.63%</text>
<text x="671" y="540.5" text-anchor="end">Cooper, Lewis: 8.99%</text>
<text x="1033" y="362.5" text-anchor="start">Chadwick, Mark: 18.94%</text>
<text x="1033" y="454.3" text-anchor="start">Anderson, Philip James: 15.51%</text>
<text x="1033" y="529.7" text-anchor="start">Apple Tree Homes Ltd: 14.36%</text>
</g>
</svg>
<!-- ===== client grid window ===== -->
<style>
.gc{position:absolute;white-space:nowrap;line-height:1;font-size:13.300px;letter-spacing:.12px;color:#1c1c1c;transform:translateY(-50%)}
.wv{position:absolute;white-space:nowrap;line-height:1;font-family:"DejaVu Sans","Liberation Sans",sans-serif;color:#222;transform:translateY(-50%)}
.wh{font-weight:bold;font-size:13.500px;letter-spacing:.45px;color:#111;transform:translate(-50%,-50%)}
.wc{font-size:14.300px;letter-spacing:.1px;color:#333}
.wl{font-size:14.300px;letter-spacing:.35px;color:#3636c8;text-decoration:underline;transform:translate(-100%,-50%)}
.wt2{font-size:14.300px;letter-spacing:.35px;color:#333;transform:translate(-100%,-50%)}
.btn{position:absolute;left:386.500px;width:57.300px;height:24.300px;background:#e1e1e1;border:1px solid #b4b4b4;font-family:"DejaVu Sans","Liberation Sans",sans-serif;font-size:12.800px;color:#2e2e2e;text-align:center;line-height:22.300px}
</style>
<svg style="left:1359.3px;top:205.1px" width="26" height="26" viewBox="0 0 26 26"><circle cx="13" cy="13" r="10.9" fill="#fff" stroke="#56b1e6" stroke-width="1.500"/><circle cx="13" cy="13" r="6" fill="#0f80d1"/><path d="M13 13.300v4.500M13 13.300l-3.600-2.300M13 13.300l3.600-2.300" fill="none" stroke="#63bdf0" stroke-width="1.100"/></svg>
<div class="abs" style="left:1348.0px;top:232.2px;width:232.0px;height:468.8px;background:#a1a1a1"></div>
<div class="abs" style="left:1348.0px;top:232.2px;width:232.0px;height:5.800px;background:linear-gradient(#b0b0b0,#a2a2a2 40%,#939393 80%,#9a9a9a)"></div>
<div class="abs" style="left:1348.0px;top:232.2px;width:7.500px;height:468.8px;background:linear-gradient(90deg,#b8b8b8,#a8a8a8 40%,#999 75%,#8a8a8a 100%)"></div>
<div class="abs" style="left:1355.5px;top:238.5px;width:224.5px;height:319.8px;background:#fff"></div>
<div class="abs" style="left:1355.5px;top:238.5px;width:22.0px;height:319.8px;background:#f5f5f5"></div>
<div class="abs" style="left:1355.5px;top:238.5px;width:224.5px;height:26.5px;background:#f0f0f0;border-bottom:2.500px solid #bcbcbc;border-top:1.500px solid #fbfbfb"></div>
<div class="abs" style="left:1376.0px;top:238.5px;width:1.500px;height:319.8px;background:#a6a6a6"></div>
<div class="abs" style="left:1420.0px;top:238.5px;width:3px;height:26.5px;background:#b4b4b4"></div>
<div class="abs" style="left:1421.0px;top:265.0px;width:1.300px;height:293.3px;background:#e2e2e2"></div>
<div class="abs" style="left:1567.5px;top:238.5px;width:2px;height:26.5px;background:#b4b4b4"></div>
<div class="abs" style="left:1568.0px;top:265.0px;width:1.300px;height:293.3px;background:#e2e2e2"></div>
<div class="abs" style="left:1355.5px;top:290.2px;width:224.5px;height:1.300px;background:#e0e0e0"></div>
<div class="abs" style="left:1355.5px;top:289.9px;width:20.5px;height:1.500px;background:#c4c4c4"></div>
<div class="abs" style="left:1355.5px;top:316.8px;width:224.5px;height:1.300px;background:#e0e0e0"></div>
<div class="abs" style="left:1355.5px;top:316.5px;width:20.5px;height:1.500px;background:#c4c4c4"></div>
<div class="abs" style="left:1355.5px;top:343.5px;width:224.5px;height:1.300px;background:#e0e0e0"></div>
<div class="abs" style="left:1355.5px;top:343.2px;width:20.5px;height:1.500px;background:#c4c4c4"></div>
<div class="abs" style="left:1355.5px;top:370.1px;width:224.5px;height:1.300px;background:#e0e0e0"></div>
<div class="abs" style="left:1355.5px;top:369.8px;width:20.5px;height:1.500px;background:#c4c4c4"></div>
<div class="abs" style="left:1355.5px;top:396.8px;width:224.5px;height:1.300px;background:#e0e0e0"></div>
<div class="abs" style="left:1355.5px;top:396.5px;width:20.5px;height:1.500px;background:#c4c4c4"></div>
<div class="abs" style="left:1355.5px;top:423.5px;width:224.5px;height:1.300px;background:#e0e0e0"></div>
<div class="abs" style="left:1355.5px;top:423.2px;width:20.5px;height:1.500px;background:#c4c4c4"></div>
<div class="abs" style="left:1355.5px;top:450.1px;width:224.5px;height:1.300px;background:#e0e0e0"></div>
<div class="abs" style="left:1355.5px;top:449.8px;width:20.5px;height:1.500px;background:#c4c4c4"></div>
<div class="abs" style="left:1355.5px;top:476.8px;width:224.5px;height:1.300px;background:#e0e0e0"></div>
<div class="abs" style="left:1355.5px;top:476.5px;width:20.5px;height:1.500px;background:#c4c4c4"></div>
<div class="abs" style="left:1355.5px;top:503.4px;width:224.5px;height:1.300px;background:#e0e0e0"></div>
<div class="abs" style="left:1355.5px;top:503.1px;width:20.5px;height:1.500px;background:#c4c4c4"></div>
<div class="abs" style="left:1355.5px;top:530.1px;width:224.5px;height:1.300px;background:#e0e0e0"></div>
<div class="abs" style="left:1355.5px;top:529.8px;width:20.5px;height:1.500px;background:#c4c4c4"></div>
<div class="abs" style="left:1355.5px;top:556.8px;width:224.5px;height:1.300px;background:#e0e0e0"></div>
<div class="abs" style="left:1355.5px;top:556.5px;width:20.5px;height:1.500px;background:#c4c4c4"></div>
<div class="gc" style="left:1382px;top:252.600px">Client</div>
<div class="gc" style="left:1497px;top:252.600px;transform:translate(-50%,-50%)">Name</div>
<div class="gc" style="left:1576px;top:252px;color:#555">J</div>
<div class="gc" style="left:1366.300px;top:278.9px;transform:translate(-50%,-50%);letter-spacing:0">1</div>
<div class="abs" style="left:1377.5px;top:268.9px;width:42.0px;height:20px;overflow:hidden"><div class="gc" style="left:4.500px;top:10px">AND2</div></div>
<div class="gc" style="left:1426px;top:278.9px">Andrews, John</div>
<div class="gc" style="left:1366.300px;top:305.6px;transform:translate(-50%,-50%);letter-spacing:0">2</div>
<div class="abs" style="left:1377.5px;top:295.6px;width:42.0px;height:20px;overflow:hidden"><div class="gc" style="left:4.500px;top:10px">AND2</div></div>
<div class="gc" style="left:1426px;top:305.6px">Andrews, John</div>
<div class="gc" style="left:1366.300px;top:332.2px;transform:translate(-50%,-50%);letter-spacing:0">3</div>
<div class="abs" style="left:1377.5px;top:322.2px;width:42.0px;height:20px;overflow:hidden"><div class="gc" style="left:4.500px;top:10px">AND7</div></div>
<div class="gc" style="left:1426px;top:332.2px">Anderson, Robert John</div>
<div class="gc" style="left:1366.300px;top:358.9px;transform:translate(-50%,-50%);letter-spacing:0">4</div>
<div class="abs" style="left:1377.5px;top:348.9px;width:42.0px;height:20px;overflow:hidden"><div class="gc" style="left:4.500px;top:10px">BID1</div></div>
<div class="gc" style="left:1426px;top:358.9px">Biddlecombe, Hayley</div>
<div class="gc" style="left:1366.300px;top:385.6px;transform:translate(-50%,-50%);letter-spacing:0">5</div>
<div class="abs" style="left:1377.5px;top:375.6px;width:42.0px;height:20px;overflow:hidden"><div class="gc" style="left:4.500px;top:10px">BID1</div></div>
<div class="gc" style="left:1426px;top:385.6px">Biddlecombe, Hayley</div>
<div class="gc" style="left:1366.300px;top:412.2px;transform:translate(-50%,-50%);letter-spacing:0">6</div>
<div class="abs" style="left:1377.5px;top:402.2px;width:42.0px;height:20px;overflow:hidden"><div class="gc" style="left:4.500px;top:10px">BID1</div></div>
<div class="gc" style="left:1426px;top:412.2px">Biddlecombe, Hayley</div>
<div class="gc" style="left:1366.300px;top:438.9px;transform:translate(-50%,-50%);letter-spacing:0">7</div>
<div class="abs" style="left:1377.5px;top:428.9px;width:42.0px;height:20px;overflow:hidden"><div class="gc" style="left:4.500px;top:10px">BID1</div></div>
<div class="gc" style="left:1426px;top:438.9px">Biddlecombe, Hayley</div>
<div class="gc" style="left:1366.300px;top:465.6px;transform:translate(-50%,-50%);letter-spacing:0">8</div>
<div class="abs" style="left:1377.5px;top:455.6px;width:42.0px;height:20px;overflow:hidden"><div class="gc" style="left:4.500px;top:10px">BIS1</div></div>
<div class="gc" style="left:1426px;top:465.6px">Bishop, Melvyn</div>
<div class="gc" style="left:1366.300px;top:492.2px;transform:translate(-50%,-50%);letter-spacing:0">9</div>
<div class="abs" style="left:1377.5px;top:482.2px;width:42.0px;height:20px;overflow:hidden"><div class="gc" style="left:4.500px;top:10px">FIS4</div></div>
<div class="gc" style="left:1426px;top:492.2px">Robert Fish</div>
<div class="gc" style="left:1366.300px;top:518.9px;transform:translate(-50%,-50%);letter-spacing:0">10</div>
<div class="abs" style="left:1377.5px;top:508.9px;width:42.0px;height:20px;overflow:hidden"><div class="gc" style="left:4.500px;top:10px">REG1</div></div>
<div class="gc" style="left:1426px;top:518.9px">Regan Christopher</div>
<div class="gc" style="left:1366.300px;top:545.5px;transform:translate(-50%,-50%);letter-spacing:0">11</div>
<div class="abs" style="left:1377.5px;top:535.5px;width:42.0px;height:20px;overflow:hidden"><div class="gc" style="left:4.500px;top:10px">STE2</div></div>
<div class="gc" style="left:1426px;top:545.5px">Stevens, Rebecca</div>
<!-- ===== purchase invoices window ===== -->
<div class="abs" style="left:362px;top:701px;width:1218px;height:4px;background:linear-gradient(#5a6e95 0,#6a7da3 45%,#c9d5ea 75%,#fff 100%)"></div>
<div class="abs" style="left:362px;top:701px;width:4.200px;height:479px;background:linear-gradient(90deg,#a6aab2 0,#7a87a3 30%,#51658f 72%,#5f7299 100%)"></div>
<svg style="left:379.100px;top:705.700px" width="26" height="26" viewBox="0 0 26 26"><circle cx="13" cy="13" r="10.9" fill="#fff" stroke="#56b1e6" stroke-width="1.500"/><circle cx="13" cy="13" r="6" fill="#0f80d1"/><path d="M13 13.300v4.500M13 13.300l-3.600-2.300M13 13.300l3.600-2.300" fill="none" stroke="#63bdf0" stroke-width="1.100"/></svg>
<div class="wt" style="left:1282px;top:718.500px;color:#5a5a5a;letter-spacing:.15px">Purchase Invoices due for Payment</div>
<div class="abs" style="left:369.800px;top:733.300px;width:1211px;height:3.500px;background:linear-gradient(#8e8e8e,#808080 60%,#9a9a9a)"></div>
<div class="abs" style="left:369.800px;top:733.500px;width:2.700px;height:447px;background:linear-gradient(90deg,#8a8a8a,#686868 50%,#8c8c8c)"></div>
<svg style="left:373px;top:749px" width="40" height="40" viewBox="0 0 40 40"><circle cx="19.500" cy="19.500" r="17.300" fill="#fff" stroke="#1d8fd8" stroke-width="2.400"/><path d="M19.500 8.300l10 5v11.400l-10 5.500-10-5.500V13.300z" fill="#1284d7"/><path d="M19.500 8.300l10 5-10 4.900-10-4.900z" fill="#2b98e0"/><path d="M19.500 18.200v12M9.500 13.300l10 4.900 10-4.900" fill="none" stroke="#6fc6f4" stroke-width="1.600"/></svg>
<div class="wv" style="left:415.800px;top:769px;font-size:15px;word-spacing:1.200px;letter-spacing:0;color:#3c3c3c">Partner for Windows</div>
<div class="abs" style="left:379.0px;top:803.500px;width:1201.0px;height:38px;background:#ece9d8"></div>
<div class="wv" style="left:386px;top:823.800px;font-weight:bold;font-size:19.200px;letter-spacing:.32px;color:#111">Purchase Invoices due for Payment</div>
<div class="abs" style="left:379.0px;top:841.3px;width:1201.0px;height:324.0px;background:#f1efe3"></div>
<div class="abs" style="left:381.2px;top:841.8px;width:134.3px;height:24.6px;background:#e6eff9"></div>
<div class="abs" style="left:381.2px;top:868.4px;width:134.3px;height:36.4px;background:#fff"></div>
<div class="abs" style="left:381.2px;top:906.8px;width:134.3px;height:36.4px;background:#fff"></div>
<div class="abs" style="left:381.2px;top:945.2px;width:134.3px;height:36.4px;background:#fff"></div>
<div class="abs" style="left:381.2px;top:983.6px;width:134.3px;height:36.4px;background:#fff"></div>
<div class="abs" style="left:381.2px;top:1022.0px;width:134.3px;height:36.4px;background:#fff"></div>
<div class="abs" style="left:381.2px;top:1060.4px;width:134.3px;height:36.4px;background:#fff"></div>
<div class="abs" style="left:381.2px;top:1098.8px;width:134.3px;height:36.4px;background:#fff"></div>
<div class="abs" style="left:381.2px;top:1137.2px;width:134.3px;height:25.4px;background:#fff"></div>
<div class="abs" style="left:517.5px;top:841.8px;width:144.0px;height:24.6px;background:#e6eff9"></div>
<div class="abs" style="left:517.5px;top:868.4px;width:144.0px;height:36.4px;background:#fff"></div>
<div class="abs" style="left:517.5px;top:906.8px;width:144.0px;height:36.4px;background:#fff"></div>
<div class="abs" style="left:517.5px;top:945.2px;width:144.0px;height:36.4px;background:#fff"></div>
<div class="abs" style="left:517.5px;top:983.6px;width:144.0px;height:36.4px;background:#fff"></div>
<div class="abs" style="left:517.5px;top:1022.0px;width:144.0px;height:36.4px;background:#fff"></div>
<div class="abs" style="left:517.5px;top:1060.4px;width:144.0px;height:36.4px;background:#fff"></div>
<div class="abs" style="left:517.5px;top:1098.8px;width:144.0px;height:36.4px;background:#fff"></div>
<div class="abs" style="left:517.5px;top:1137.2px;width:144.0px;height:25.4px;background:#fff"></div>
<div class="abs" style="left:663.5px;top:841.8px;width:368.5px;height:24.6px;background:#e6eff9"></div>
<div class="abs" style="left:663.5px;top:868.4px;width:368.5px;height:36.4px;background:#fff"></div>
<div class="abs" style="left:663.5px;top:906.8px;width:368.5px;height:36.4px;background:#fff"></div>
<div class="abs" style="left:663.5px;top:945.2px;width:368.5px;height:36.4px;background:#fff"></div>
<div class="abs" style="left:663.5px;top:983.6px;width:368.5px;height:36.4px;background:#fff"></div>
<div class="abs" style="left:663.5px;top:1022.0px;width:368.5px;height:36.4px;background:#fff"></div>
<div class="abs" style="left:663.5px;top:1060.4px;width:368.5px;height:36.4px;background:#fff"></div>
<div class="abs" style="left:663.5px;top:1098.8px;width:368.5px;height:36.4px;background:#fff"></div>
<div class="abs" style="left:663.5px;top:1137.2px;width:368.5px;height:25.4px;background:#fff"></div>
<div class="abs" style="left:1034.0px;top:841.8px;width:177.5px;height:24.6px;background:#e6eff9"></div>
<div class="abs" style="left:1034.0px;top:868.4px;width:177.5px;height:36.4px;background:#fff"></div>
<div class="abs" style="left:1034.0px;top:906.8px;width:177.5px;height:36.4px;background:#fff"></div>
<div class="abs" style="left:1034.0px;top:945.2px;width:177.5px;height:36.4px;background:#fff"></div>
<div class="abs" style="left:1034.0px;top:983.6px;width:177.5px;height:36.4px;background:#fff"></div>
<div class="abs" style="left:1034.0px;top:1022.0px;width:177.5px;height:36.4px;background:#fff"></div>
<div class="abs" style="left:1034.0px;top:1060.4px;width:177.5px;height:36.4px;background:#fff"></div>
<div class="abs" style="left:1034.0px;top:1098.8px;width:177.5px;height:36.4px;background:#fff"></div>
<div class="abs" style="left:1034.0px;top:1137.2px;width:177.5px;height:25.4px;background:#fff"></div>
<div class="abs" style="left:1213.5px;top:841.8px;width:197.5px;height:24.6px;background:#e6eff9"></div>
<div class="abs" style="left:1213.5px;top:868.4px;width:197.5px;height:36.4px;background:#fff"></div>
<div class="abs" style="left:1213.5px;top:906.8px;width:197.5px;height:36.4px;background:#fff"></div>
<div class="abs" style="left:1213.5px;top:945.2px;width:197.5px;height:36.4px;background:#fff"></div>
<div class="abs" style="left:1213.5px;top:983.6px;width:197.5px;height:36.4px;background:#fff"></div>
<div class="abs" style="left:1213.5px;top:1022.0px;width:197.5px;height:36.4px;background:#fff"></div>
<div class="abs" style="left:1213.5px;top:1060.4px;width:197.5px;height:36.4px;background:#fff"></div>
<div class="abs" style="left:1213.5px;top:1098.8px;width:197.5px;height:36.4px;background:#fff"></div>
<div class="abs" style="left:1213.5px;top:1137.2px;width:197.5px;height:25.4px;background:#fff"></div>
<div class="abs" style="left:1413.0px;top:841.8px;width:162.0px;height:24.6px;background:#e6eff9"></div>
<div class="abs" style="left:1413.0px;top:868.4px;width:162.0px;height:36.4px;background:#fff"></div>
<div class="abs" style="left:1413.0px;top:906.8px;width:162.0px;height:36.4px;background:#fff"></div>
<div class="abs" style="left:1413.0px;top:945.2px;width:162.0px;height:36.4px;background:#fff"></div>
<div class="abs" style="left:1413.0px;top:983.6px;width:162.0px;height:36.4px;background:#fff"></div>
<div class="abs" style="left:1413.0px;top:1022.0px;width:162.0px;height:36.4px;background:#fff"></div>
<div class="abs" style="left:1413.0px;top:1060.4px;width:162.0px;height:36.4px;background:#fff"></div>
<div class="abs" style="left:1413.0px;top:1098.8px;width:162.0px;height:36.4px;background:#fff"></div>
<div class="abs" style="left:1413.0px;top:1137.2px;width:162.0px;height:25.4px;background:#fff"></div>
<div class="abs" style="left:1577.0px;top:841.8px;width:12.0px;height:24.6px;background:#e6eff9"></div>
<div class="abs" style="left:1577.0px;top:868.4px;width:12.0px;height:36.4px;background:#fff"></div>
<div class="abs" style="left:1577.0px;top:906.8px;width:12.0px;height:36.4px;background:#fff"></div>
<div class="abs" style="left:1577.0px;top:945.2px;width:12.0px;height:36.4px;background:#fff"></div>
<div class="abs" style="left:1577.0px;top:983.6px;width:12.0px;height:36.4px;background:#fff"></div>
<div class="abs" style="left:1577.0px;top:1022.0px;width:12.0px;height:36.4px;background:#fff"></div>
<div class="abs" style="left:1577.0px;top:1060.4px;width:12.0px;height:36.4px;background:#fff"></div>
<div class="abs" style="left:1577.0px;top:1098.8px;width:12.0px;height:36.4px;background:#fff"></div>
<div class="abs" style="left:1577.0px;top:1137.2px;width:12.0px;height:25.4px;background:#fff"></div>
<div class="abs" style="left:379.0px;top:1162.8px;width:1201.0px;height:2.800px;background:linear-gradient(#d9d6cd,#c9c8c4)"></div>
<div class="wv wh" style="left:447.8px;top:855.2px;letter-spacing:.12px">Action</div>
<div class="wv wh" style="left:589.5px;top:855.2px;letter-spacing:.12px">Supplier</div>
<div class="wv wh" style="left:847.8px;top:855.2px;letter-spacing:.12px">Name</div>
<div class="wv wh" style="left:1122.8px;top:855.2px;letter-spacing:.45px">0-30 Days</div>
<div class="wv wh" style="left:1312.2px;top:855.2px;letter-spacing:.45px">31-60 Days</div>
<div class="wv wh" style="left:1511.5px;top:855.2px;letter-spacing:.45px">61-90 Days</div>
<div class="btn" style="top:874.5px">Action</div>
<div class="wv wc" style="left:522px;top:887.3px">ANG3</div>
<div class="wv wc" style="left:668px;top:887.3px">Anglian Water</div>
<div class="wv wl" style="left:1208px;top:887.3px">£0.00</div>
<div class="wv wl" style="left:1407px;top:887.3px">£0.00</div>
<div class="wv wl" style="left:1570.5px;top:887.3px">£0.00</div>
<div class="btn" style="top:912.9px">Action</div>
<div class="wv wc" style="left:522px;top:925.7px">BUT1</div>
<div class="wv wc" style="left:668px;top:925.7px">Butterworths Tolley</div>
<div class="wv wl" style="left:1208px;top:925.7px">£0.00</div>
<div class="wv wl" style="left:1407px;top:925.7px">£0.00</div>
<div class="wv wl" style="left:1570.5px;top:925.7px">£0.00</div>
<div class="btn" style="top:951.3px">Action</div>
<div class="wv wc" style="left:522px;top:964.1px">EXP1</div>
<div class="wv wc" style="left:668px;top:964.1px">Expenses - TFB</div>
<div class="wv wl" style="left:1208px;top:964.1px">£0.00</div>
<div class="wv wl" style="left:1407px;top:964.1px">£0.00</div>
<div class="wv wl" style="left:1570.5px;top:964.1px">£0.00</div>
<div class="btn" style="top:989.7px">Action</div>
<div class="wv wc" style="left:522px;top:1002.5px">JER1</div>
<div class="wv wc" style="left:668px;top:1002.5px">Jeremy Ervine Chambers</div>
<div class="wv wl" style="left:1208px;top:1002.5px">£0.00</div>
<div class="wv wl" style="left:1407px;top:1002.5px">£0.00</div>
<div class="wv wl" style="left:1570.5px;top:1002.5px">£0.00</div>
<div class="btn" style="top:1028.1px">Action</div>
<div class="wv wc" style="left:522px;top:1040.9px">LEV1</div>
<div class="wv wc" style="left:668px;top:1040.9px">Level Law</div>
<div class="wv wl" style="left:1208px;top:1040.9px">£0.00</div>
<div class="wv wl" style="left:1407px;top:1040.9px">£0.00</div>
<div class="wv wl" style="left:1570.5px;top:1040.9px">£0.00</div>
<div class="btn" style="top:1066.5px">Action</div>
<div class="wv wc" style="left:522px;top:1079.3px">NTL1</div>
<div class="wv wc" style="left:668px;top:1079.3px">NTL Group Ltd</div>
<div class="wv wl" style="left:1208px;top:1079.3px">£0.00</div>
<div class="wv wl" style="left:1407px;top:1079.3px">£0.00</div>
<div class="wv wl" style="left:1570.5px;top:1079.3px">£0.00</div>
<div class="btn" style="top:1104.9px">Action</div>
<div class="wv wc" style="left:522px;top:1117.7px">ONE3</div>
<div class="wv wc" style="left:668px;top:1117.7px">One Tel</div>
<div class="wv wl" style="left:1208px;top:1117.7px">£0.00</div>
<div class="wv wl" style="left:1407px;top:1117.7px">£0.00</div>
<div class="wv wl" style="left:1570.5px;top:1117.7px">£0.00</div>
<div class="wv" style="left:386px;top:1151.1px;font-weight:bold;font-size:13.500px;letter-spacing:.4px;color:#111">Total</div>
<div class="wv wt2" style="left:1208px;top:1151.1px">£0.00</div>
<div class="wv wt2" style="left:1407px;top:1151.1px">£0.00</div>
<div class="wv wt2" style="left:1570.5px;top:1151.1px">£0.00</div>
</body>
</html>
